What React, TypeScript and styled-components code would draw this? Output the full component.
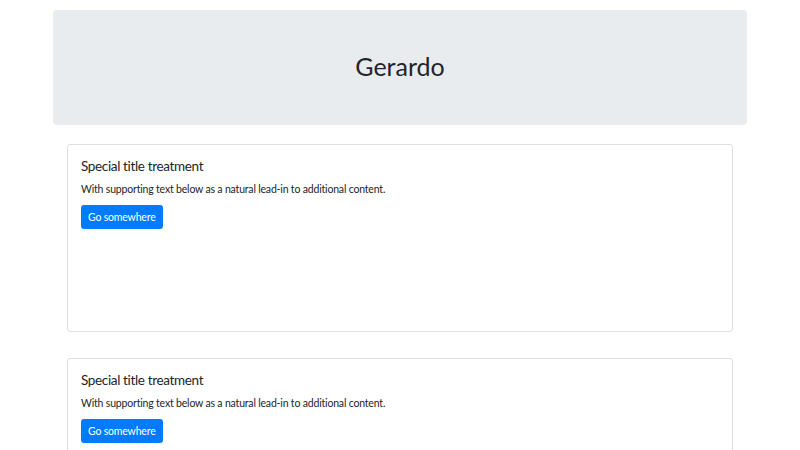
import styled, { createGlobalStyle } from "styled-components";

const GlobalStyle = createGlobalStyle`
  body {
    margin: 0;
    background: #fff;
    color: #212529;
    font-family: Lato, "Open Sans", "Liberation Sans", sans-serif;
  }
`;

const cards = [
  {
    title: "Special title treatment",
    text: "With supporting text below as a natural lead-in to additional content.",
    action: "Go somewhere",
  },
  {
    title: "Special title treatment",
    text: "With supporting text below as a natural lead-in to additional content.",
    action: "Go somewhere",
  },
];

export default function App() {
  return (
    <>
      <GlobalStyle />
      <Container>
        <Jumbotron>
          <Heading>Gerardo</Heading>
        </Jumbotron>
        <CardList>
          {cards.map((card, i) => (
            <Card key={i}>
              <CardTitle>{card.title}</CardTitle>
              <CardText>{card.text}</CardText>
              <Button>{card.action}</Button>
            </Card>
          ))}
        </CardList>
      </Container>
    </>
  );
}

const Container = styled.div`
  width: 694px;
  margin: 0 auto;
  padding-top: 10px;
`;

const Jumbotron = styled.div`
  height: 115px;
  box-sizing: border-box;
  padding-bottom: 3px;
  background: #e9ecef;
  border-radius: 4px;
  display: flex;
  align-items: center;
  justify-content: center;
`;

const Heading = styled.h1`
  margin: 0;
  font-size: 25px;
  font-weight: 400;
  line-height: 1.2;
  color: #212529;
`;

const CardList = styled.div`
  display: flex;
  flex-direction: column;
  gap: 26px;
  padding: 19px 14px 0;
`;

const Card = styled.div`
  height: 188px;
  box-sizing: border-box;
  border: 1px solid #dfdfdf;
  border-radius: 3px;
  padding: 13px 13px;
  display: flex;
  flex-direction: column;
  align-items: flex-start;
`;

const CardTitle = styled.h5`
  margin: 0 0 7px;
  font-size: 13.5px;
  font-weight: 400;
  line-height: 1.2;
  letter-spacing: -0.35px;
`;

const CardText = styled.p`
  margin: 0 0 8px;
  font-size: 10.5px;
  line-height: 1.55;
  letter-spacing: -0.18px;
`;

const Button = styled.button`
  height: 24px;
  padding: 0 7px;
  border: none;
  border-radius: 3px;
  background: #007bff;
  color: #fff;
  font-family: inherit;
  font-size: 10.5px;
  letter-spacing: -0.18px;
  line-height: 24px;
  cursor: pointer;
`;
